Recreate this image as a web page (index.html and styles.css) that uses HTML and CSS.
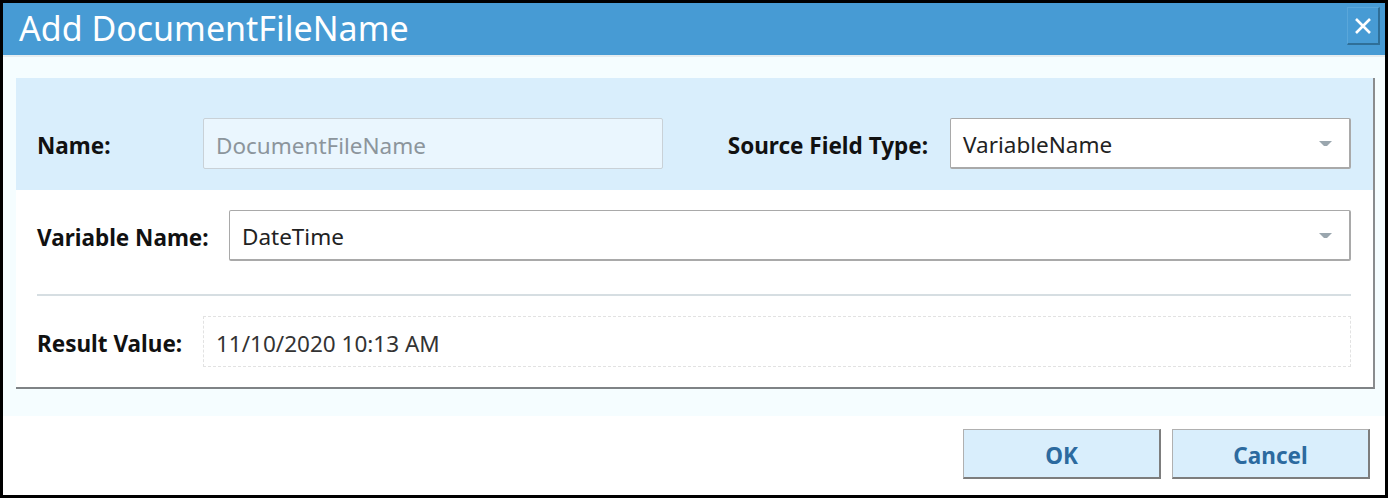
FILE: index.html
```html
<!DOCTYPE html>
<html lang="en">
<head>
    <meta charset="UTF-8">
    <title>Add DocumentFileName</title>
    <link rel="stylesheet" href="styles.css">
</head>
<body>
    <div class="dialog">
        <div class="title-bar">
            <span class="title">Add DocumentFileName</span>
            <button class="close-btn" aria-label="Close">
                <svg width="18" height="16" viewBox="0 0 18 16">
                    <path d="M2 1 L16 15 M16 1 L2 15" stroke="#fff" stroke-width="2.6" fill="none"/>
                </svg>
            </button>
        </div>

        <div class="dialog-body">
            <div class="panel">
                <div class="panel-top">
                    <label class="field-label name-label">Name:</label>
                    <div class="text-box disabled">DocumentFileName</div>
                    <label class="field-label source-label">Source Field Type:</label>
                    <div class="combo source-combo">
                        <span>VariableName</span>
                        <svg class="arrow" width="13" height="6" viewBox="0 0 13 6"><polygon points="0,0 13,0 8,5 5,5" fill="#9aa6ae"/></svg>
                    </div>
                </div>

                <div class="panel-main">
                    <div class="form-row">
                        <label class="field-label var-label">Variable Name:</label>
                        <div class="combo var-combo">
                            <span>DateTime</span>
                            <svg class="arrow" width="13" height="6" viewBox="0 0 13 6"><polygon points="0,0 13,0 8,5 5,5" fill="#9aa6ae"/></svg>
                        </div>
                    </div>

                    <div class="divider"></div>

                    <div class="form-row">
                        <label class="field-label name-label">Result Value:</label>
                        <div class="result-box">11/10/2020 10:13 AM</div>
                    </div>
                </div>
            </div>
        </div>

        <div class="dialog-footer">
            <button class="dlg-btn">OK</button>
            <button class="dlg-btn">Cancel</button>
        </div>
    </div>
</body>
</html>
```

FILE: styles.css
```css
:root {
    --title-blue: #479bd4;
    --row-blue: #d9eefc;
    --body-tint: #f5fdff;
}

* {
    box-sizing: border-box;
}

body {
    margin: 0;
    padding: 0;
    font-family: "Noto Sans", "Open Sans", sans-serif;
    background: #fff;
}

.dialog {
    width: 1388px;
    height: 498px;
    border: 3px solid #000;
    display: flex;
    flex-direction: column;
    background: #fff;
}

.title-bar {
    height: 54px;
    background: var(--title-blue);
    border-bottom: 2px solid #e6edf0;
    display: flex;
    align-items: center;
    justify-content: space-between;
    padding: 0 5px 0 16px;
}

.title {
    color: #fff;
    font-size: 34px;
    line-height: 1;
    margin-top: -3px;
}

.close-btn {
    width: 33px;
    height: 38px;
    margin-top: -6px;
    background: transparent;
    border: 1px solid #5aa7da;
    border-right: 2px solid #2f6f98;
    border-bottom: 2px solid #2f6f98;
    display: flex;
    align-items: center;
    justify-content: center;
    padding: 0;
}

.dialog-body {
    background: var(--body-tint);
    padding: 21px 10px 27px 13px;
}

.panel {
    background: #fff;
    border-right: 2px solid #8a8c8e;
    border-bottom: 2px solid #7f8386;
}

.panel-top {
    background: var(--row-blue);
    height: 112px;
    display: flex;
    align-items: center;
    padding: 19px 22px 0 21px;
}

.field-label {
    font-weight: bold;
    font-size: 22.5px;
    color: #111;
    white-space: nowrap;
    padding-top: 4px;
}

.name-label {
    width: 166px;
    flex: none;
}

.var-label {
    width: 192px;
    flex: none;
}

.panel-top .source-label {
    margin-left: auto;
    margin-right: 22px;
}

.text-box,
.combo,
.result-box {
    height: 51px;
    display: flex;
    align-items: center;
    font-size: 22.5px;
    padding: 3px 12px 0;
}

.text-box.disabled {
    width: 460px;
    background: #eaf6fe;
    border: 1px solid #c9d1d7;
    border-radius: 2px;
    color: #8c959c;
}

.combo {
    background: #fff;
    border: 1px solid #a9a9a9;
    border-right-width: 2px;
    border-bottom-width: 2px;
    border-radius: 2px;
    color: #222;
    justify-content: space-between;
    padding-right: 17px;
}

.source-combo {
    width: 401px;
}

.var-combo {
    flex: 1;
}

.arrow {
    margin-top: -2px;
}

.panel-main {
    padding: 20px 22px 20px 21px;
}

.form-row {
    display: flex;
    align-items: center;
}

.divider {
    height: 2px;
    background: #d6dee2;
    margin: 33px 0 20px;
}

.result-box {
    flex: 1;
    border: 1px dashed #e2e2e2;
    color: #333;
}

.dialog-footer {
    flex: 1;
    display: flex;
    justify-content: flex-end;
    align-items: flex-start;
    gap: 11px;
    padding: 13px 15px 0 0;
}

.dlg-btn {
    width: 198px;
    height: 50px;
    padding-top: 5px;
    background: var(--row-blue);
    border: 1px solid #b0b0b0;
    border-right: 2px solid #7d7d7d;
    border-bottom: 2px solid #7d7d7d;
    font-family: "Noto Sans", "Open Sans", sans-serif;
    font-weight: bold;
    font-size: 22.5px;
    color: #2c6a9f;
    cursor: pointer;
}
```
